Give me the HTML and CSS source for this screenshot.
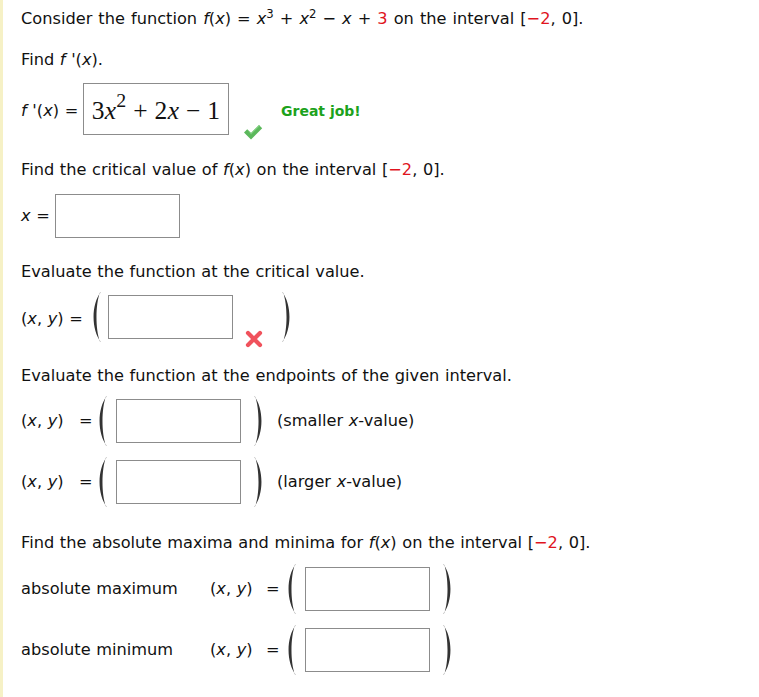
FILE: index.html
```html
<!DOCTYPE html>
<html>
<head>
<meta charset="utf-8">
<link rel="stylesheet" href="styles.css">
</head>
<body>
<div class="page">
  <p class="txt t1">Consider the function <i>f</i>(<i>x</i>) = <i>x</i><sup>3</sup> + <i>x</i><sup>2</sup> − <i>x</i> + <span class="red">3</span> on the interval [<span class="red">−2</span>, 0].</p>
  <p class="txt t2">Find <i>f</i> '(<i>x</i>).</p>

  <div class="row r-deriv">
    <span class="lbl-deriv"><i>f</i> '(<i>x</i>) =</span>
    <div class="mathbox"><span class="m">3<i>x</i><sup>2</sup> + 2<i>x</i> − 1</span></div>
    <svg class="check" width="20" height="16" viewBox="0 0 20 16"><path d="M1,8.5 L4.2,5.3 L8,9.1 L16,1.1 L19.2,4.3 L8,15.5 Z" fill="#5cb85c"/><path d="M4.2,5.3 L8,9.1 L16,1.1 L16.8,1.9 L8,10.5 Z" fill="#7fcf7f"/></svg>
    <span class="great">Great job!</span>
  </div>

  <p class="txt t3">Find the critical value of <i>f</i>(<i>x</i>) on the interval [<span class="red">−2</span>, 0].</p>

  <div class="row r-x">
    <span class="lbl-x"><i>x</i> =</span>
    <div class="box"></div>
  </div>

  <p class="txt t4">Evaluate the function at the critical value.</p>

  <div class="row r-crit">
    <span class="lbl-crit">(<i>x</i>, <i>y</i>) =</span>
    <svg class="paren pl" width="9" height="50" viewBox="0 0 9 50"><path d="M8.6,0.5 C-0.8,12 -0.8,38 8.6,49.5 L8,49.5 C3.3,38 3.3,12 8,0.5 Z" fill="#333333"/></svg>
    <div class="box"></div>
    <svg class="cross" width="18" height="18" viewBox="0 0 18 18"><path d="M3,3 L15,15 M15,3 L3,15" stroke="#f0525c" stroke-width="4.2" stroke-linecap="round"/></svg>
    <svg class="paren pr pr-crit" width="9" height="50" viewBox="0 0 9 50"><path d="M0.4,0.5 C9.8,12 9.8,38 0.4,49.5 L1,49.5 C5.7,38 5.7,12 1,0.5 Z" fill="#333333"/></svg>
  </div>

  <p class="txt t5">Evaluate the function at the endpoints of the given interval.</p>

  <div class="row r-end r-end1">
    <span class="lbl-xy">(<i>x</i>, <i>y</i>)</span>
    <span class="lbl-eq">=</span>
    <svg class="paren pl" width="9" height="50" viewBox="0 0 9 50"><path d="M8.6,0.5 C-0.8,12 -0.8,38 8.6,49.5 L8,49.5 C3.3,38 3.3,12 8,0.5 Z" fill="#333333"/></svg>
    <div class="box"></div>
    <svg class="paren pr" width="9" height="50" viewBox="0 0 9 50"><path d="M0.4,0.5 C9.8,12 9.8,38 0.4,49.5 L1,49.5 C5.7,38 5.7,12 1,0.5 Z" fill="#333333"/></svg>
    <span class="note">(smaller <i>x</i>-value)</span>
  </div>

  <div class="row r-end r-end2">
    <span class="lbl-xy">(<i>x</i>, <i>y</i>)</span>
    <span class="lbl-eq">=</span>
    <svg class="paren pl" width="9" height="50" viewBox="0 0 9 50"><path d="M8.6,0.5 C-0.8,12 -0.8,38 8.6,49.5 L8,49.5 C3.3,38 3.3,12 8,0.5 Z" fill="#333333"/></svg>
    <div class="box"></div>
    <svg class="paren pr" width="9" height="50" viewBox="0 0 9 50"><path d="M0.4,0.5 C9.8,12 9.8,38 0.4,49.5 L1,49.5 C5.7,38 5.7,12 1,0.5 Z" fill="#333333"/></svg>
    <span class="note">(larger <i>x</i>-value)</span>
  </div>

  <p class="txt t6">Find the absolute maxima and minima for <i>f</i>(<i>x</i>) on the interval [<span class="red">−2</span>, 0].</p>

  <div class="row r-abs r-abs1">
    <span class="lbl-abs">absolute maximum</span>
    <span class="lbl-xy2">(<i>x</i>, <i>y</i>)</span>
    <span class="lbl-eq2">=</span>
    <svg class="paren pl" width="9" height="50" viewBox="0 0 9 50"><path d="M8.6,0.5 C-0.8,12 -0.8,38 8.6,49.5 L8,49.5 C3.3,38 3.3,12 8,0.5 Z" fill="#333333"/></svg>
    <div class="box box-abs"></div>
    <svg class="paren pr" width="9" height="50" viewBox="0 0 9 50"><path d="M0.4,0.5 C9.8,12 9.8,38 0.4,49.5 L1,49.5 C5.7,38 5.7,12 1,0.5 Z" fill="#333333"/></svg>
  </div>

  <div class="row r-abs r-abs2">
    <span class="lbl-abs">absolute minimum</span>
    <span class="lbl-xy2">(<i>x</i>, <i>y</i>)</span>
    <span class="lbl-eq2">=</span>
    <svg class="paren pl" width="9" height="50" viewBox="0 0 9 50"><path d="M8.6,0.5 C-0.8,12 -0.8,38 8.6,49.5 L8,49.5 C3.3,38 3.3,12 8,0.5 Z" fill="#333333"/></svg>
    <div class="box box-abs"></div>
    <svg class="paren pr" width="9" height="50" viewBox="0 0 9 50"><path d="M0.4,0.5 C9.8,12 9.8,38 0.4,49.5 L1,49.5 C5.7,38 5.7,12 1,0.5 Z" fill="#333333"/></svg>
  </div>
</div>
</body>
</html>
```

FILE: styles.css
```css
html, body {
  margin: 0;
  padding: 0;
  background: #ffffff;
}

.page {
  box-sizing: border-box;
  min-height: 697px;
  border-left: 3px solid #f6f1c6;
  padding: 8px 0 0 18px;
  font-family: "DejaVu Sans", Verdana, sans-serif;
  font-size: 16.2px;
  word-spacing: 0.5px;
  line-height: 20px;
  color: #111111;
}

.txt {
  margin: 0;
  height: 20px;
  white-space: nowrap;
}

.t1 {
  word-spacing: 0.9px;
}

sup {
  font-size: 0.72em;
  line-height: 0;
  vertical-align: 0.5em;
}

.red {
  color: #e0141e;
}

.t1 { margin-top: 1px; }
.t2 { margin-top: 21px; }
.t3 { margin-top: 25px; }
.t4 { margin-top: 24px; }
.t5 { margin-top: 24px; }
.t6 { margin-top: 26px; }

.row {
  display: flex;
  align-items: center;
  white-space: nowrap;
}

/* derivative row */
.r-deriv {
  margin-top: 13px;
  height: 52px;
}
.lbl-deriv {
  width: 62px;
  padding-top: 4px;
}
.mathbox {
  box-sizing: border-box;
  width: 146px;
  height: 52px;
  border: 1px solid #8c8c8c;
  display: flex;
  align-items: center;
  justify-content: center;
}
.m {
  font-family: "Liberation Serif", "Times New Roman", serif;
  font-size: 25.5px;
  line-height: 24px;
  letter-spacing: 0.3px;
  word-spacing: 0;
  color: #111;
  padding-top: 4px;
}
.m sup {
  font-size: 0.78em;
  vertical-align: 0.6em;
}
.check {
  align-self: flex-end;
  margin-left: 14px;
  margin-bottom: -5px;
}
.great {
  margin-left: 18px;
  font-weight: bold;
  font-size: 14px;
  word-spacing: 0;
  color: #1ca21c;
  padding-top: 4px;
}

/* x = row */
.r-x {
  margin-top: 14px;
  height: 44px;
}
.lbl-x {
  width: 34px;
}

.box {
  box-sizing: border-box;
  width: 125px;
  height: 44px;
  border: 1px solid #8c8c8c;
  background: #fff;
}

/* critical row */
.r-crit {
  margin-top: 10px;
  height: 50px;
}
.lbl-crit {
  width: 71px;
  padding-top: 3px;
}
.paren {
  flex: none;
  display: block;
}
.r-crit .pl { margin-right: 7px; }
.cross {
  align-self: flex-end;
  margin-left: 12px;
  margin-bottom: -6px;
}
.pr-crit { margin-left: 19px; }

/* endpoint rows */
.r-end {
  height: 50px;
}
.r-end1 { margin-top: 10px; }
.r-end2 { margin-top: 11px; }
.lbl-xy {
  width: 58px;
}
.lbl-eq {
  width: 19px;
}
.r-end .pl { margin-right: 9px; }
.r-end .pr { margin-left: 13px; }
.note {
  margin-left: 14px;
}

/* absolute rows */
.r-abs {
  height: 50px;
}
.r-abs1 { margin-top: 11px; }
.r-abs2 { margin-top: 11px; }
.lbl-abs {
  width: 189px;
}
.lbl-xy2 {
  width: 56px;
}
.lbl-eq2 {
  width: 21px;
}
.r-abs .pl { margin-right: 9px; }
.r-abs .pr { margin-left: 13px; }
```
